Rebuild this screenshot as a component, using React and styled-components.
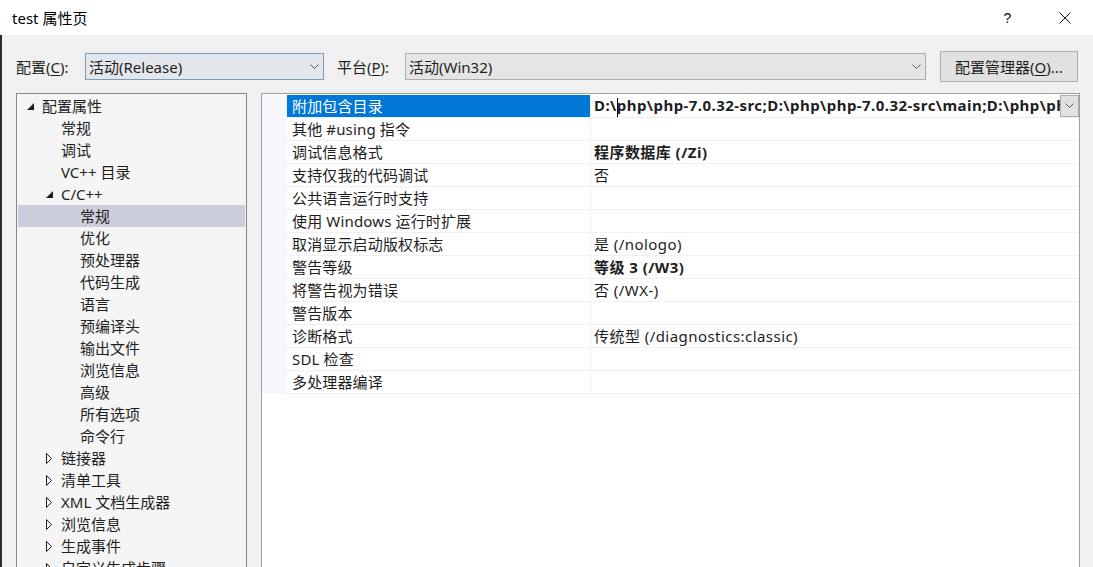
import React from "react";
import styled, { createGlobalStyle } from "styled-components";

const GlobalStyle = createGlobalStyle`
  html, body {
    margin: 0;
    padding: 0;
    background: #f0f0f0;
  }
  body {
    font-family: "Noto Sans", "Noto Sans CJK SC", sans-serif;
    color: #1e1e1e;
  }
`;

const Window = styled.div`
  width: 1093px;
  height: 567px;
  overflow: hidden;
  display: flex;
  flex-direction: column;
  background: #f0f0f0;
`;

const TitleBar = styled.div`
  height: 35px;
  flex: none;
  background: #ffffff;
  display: flex;
  align-items: center;
  padding-left: 12px;
  font-size: 15px;
  color: #000;
`;

const Title = styled.div`
  flex: 1;
  line-height: 20px;
`;

const TitleButton = styled.div`
  width: 57px;
  height: 35px;
  display: flex;
  align-items: center;
  justify-content: center;
  font-family: "Liberation Sans", sans-serif;
  font-size: 14px;
  color: #111;
`;

const Body = styled.div`
  flex: 1;
  min-height: 0;
  border-left: 2px solid #2b2b2b;
  padding: 16px 13px 0 14px;
  display: flex;
  flex-direction: column;
  gap: 11px;
`;

const Toolbar = styled.div`
  display: flex;
  align-items: center;
  height: 31px;
  font-size: 15px;
`;

const Label = styled.span`
  line-height: 20px;
  width: ${(p) => p.$w}px;
  u {
    text-decoration: underline;
    text-underline-offset: 2px;
  }
`;

const Combo = styled.div`
  width: ${(p) => p.$w}px;
  height: 27px;
  box-sizing: border-box;
  border: 1px solid ${(p) => (p.$focus ? "#7f9db9" : "#acacac")};
  background: ${(p) => (p.$focus ? "#e3e6ea" : "#e5e5e5")};
  display: flex;
  align-items: center;
  padding-left: 3px;
  margin-right: ${(p) => p.$mr}px;
  line-height: 20px;
`;

const ComboText = styled.span`
  flex: 1;
`;

const Chevron = styled.span`
  width: 17px;
  display: flex;
  justify-content: center;
`;

const Button = styled.div`
  width: 138px;
  height: 31px;
  box-sizing: border-box;
  border: 1px solid #adadad;
  background: #e1e1e1;
  display: flex;
  align-items: center;
  justify-content: center;
  line-height: 20px;
  u {
    text-decoration: underline;
    text-underline-offset: 2px;
  }
`;

const Panels = styled.div`
  flex: 1;
  min-height: 0;
  display: flex;
  gap: 14px;
`;

const Tree = styled.div`
  width: 231px;
  box-sizing: border-box;
  border: 1px solid #828790;
  border-bottom: none;
  background: #f5f5f5;
  padding-top: 1px;
  font-size: 15px;
  overflow: hidden;
`;

const TreeRow = styled.div`
  height: 22px;
  margin: 0 1px;
  display: flex;
  align-items: center;
  padding-left: ${(p) => 9 + p.$level * 19}px;
  background: ${(p) => (p.$selected ? "#cccedb" : "transparent")};
  line-height: 20px;
  white-space: nowrap;
`;

const Arrow = styled.span`
  width: 15px;
  flex: none;
  display: flex;
  align-items: center;
`;

const Grid = styled.div`
  flex: 1;
  box-sizing: border-box;
  border: 1px solid #a0a0a0;
  border-bottom: none;
  background: #fff;
  padding-top: 1px;
  font-size: 15px;
`;

const PropRow = styled.div`
  display: grid;
  grid-template-columns: 25px 304px 1fr;
  height: 23px;
`;

const Gutter = styled.div`
  background: #f5f7fc;
`;

const NameCell = styled.div`
  border-bottom: 1px solid #eef0f4;
  border-right: 1px solid #eef0f4;
  padding-left: 5px;
  display: flex;
  align-items: center;
  line-height: 20px;
  white-space: nowrap;
  letter-spacing: 0.15px;
  background: ${(p) => (p.$selected ? "#0078d7" : "transparent")};
  color: ${(p) => (p.$selected ? "#fff" : "#1e1e1e")};
`;

const ValueCell = styled.div`
  border-bottom: 1px solid #eef0f4;
  padding-left: 3px;
  display: flex;
  align-items: center;
  line-height: 20px;
  white-space: nowrap;
  overflow: hidden;
  letter-spacing: 0.45px;
  font-weight: ${(p) => (p.$bold ? 700 : 400)};
  color: #1e1e1e;
`;

const ValueText = styled.span`
  flex: 1;
  overflow: hidden;
`;

const Caret = styled.span`
  display: inline-block;
  width: 0;
  height: 19px;
  border-left: 1px solid #000;
  vertical-align: middle;
  margin: 0 -1px 0 0;
`;

const DropButton = styled.div`
  width: 19px;
  height: 22px;
  flex: none;
  box-sizing: border-box;
  border: 1px solid #adadad;
  background: #e1e1e1;
  display: flex;
  align-items: center;
  justify-content: center;
  margin-top: -1px;
`;

const ChevronIcon = () => (
  <svg width="9" height="5" viewBox="0 0 9 5">
    <polyline points="0.5,0.5 4.5,4.5 8.5,0.5" fill="none" stroke="#555" strokeWidth="1" />
  </svg>
);

const OpenArrow = () => (
  <svg width="7" height="7" viewBox="0 0 7 7">
    <polygon points="7,0 7,7 0,7" fill="#1e1e1e" />
  </svg>
);

const ClosedArrow = () => (
  <svg width="6" height="11" viewBox="0 0 6 11">
    <polygon points="0.5,0.5 5.5,5.5 0.5,10.5" fill="none" stroke="#1e1e1e" strokeWidth="1" />
  </svg>
);

const CloseIcon = () => (
  <svg width="12" height="12" viewBox="0 0 12 12">
    <path d="M0.5 0.5 L11.5 11.5 M11.5 0.5 L0.5 11.5" stroke="#111" strokeWidth="1" />
  </svg>
);

const treeItems = [
  { label: "配置属性", level: 0, arrow: "open" },
  { label: "常规", level: 1 },
  { label: "调试", level: 1 },
  { label: "VC++ 目录", level: 1 },
  { label: "C/C++", level: 1, arrow: "open" },
  { label: "常规", level: 2, selected: true },
  { label: "优化", level: 2 },
  { label: "预处理器", level: 2 },
  { label: "代码生成", level: 2 },
  { label: "语言", level: 2 },
  { label: "预编译头", level: 2 },
  { label: "输出文件", level: 2 },
  { label: "浏览信息", level: 2 },
  { label: "高级", level: 2 },
  { label: "所有选项", level: 2 },
  { label: "命令行", level: 2 },
  { label: "链接器", level: 1, arrow: "closed" },
  { label: "清单工具", level: 1, arrow: "closed" },
  { label: "XML 文档生成器", level: 1, arrow: "closed" },
  { label: "浏览信息", level: 1, arrow: "closed" },
  { label: "生成事件", level: 1, arrow: "closed" },
  { label: "自定义生成步骤", level: 1, arrow: "closed" },
];

const props = [
  { name: "附加包含目录", value: "php\\php-7.0.32-src;D:\\php\\php-7.0.32-src\\main;D:\\php\\php-7.0.32-src\\Zend", bold: true, selected: true },
  { name: "其他 #using 指令", value: "" },
  { name: "调试信息格式", value: "程序数据库 (/Zi)", bold: true },
  { name: "支持仅我的代码调试", value: "否" },
  { name: "公共语言运行时支持", value: "" },
  { name: "使用 Windows 运行时扩展", value: "" },
  { name: "取消显示启动版权标志", value: "是 (/nologo)" },
  { name: "警告等级", value: "等级 3 (/W3)", bold: true },
  { name: "将警告视为错误", value: "否 (/WX-)" },
  { name: "警告版本", value: "" },
  { name: "诊断格式", value: "传统型 (/diagnostics:classic)" },
  { name: "SDL 检查", value: "" },
  { name: "多处理器编译", value: "" },
];

export default function App() {
  return (
    <>
      <GlobalStyle />
      <Window>
        <TitleBar>
          <Title>test 属性页</Title>
          <TitleButton>?</TitleButton>
          <TitleButton>
            <CloseIcon />
          </TitleButton>
        </TitleBar>
        <Body>
          <Toolbar>
            <Label $w={69}>
              配置(<u>C</u>):
            </Label>
            <Combo $w={239} $mr={13} $focus>
              <ComboText>活动(Release)</ComboText>
              <Chevron>
                <ChevronIcon />
              </Chevron>
            </Combo>
            <Label $w={68}>
              平台(<u>P</u>):
            </Label>
            <Combo $w={521} $mr={14}>
              <ComboText>活动(Win32)</ComboText>
              <Chevron>
                <ChevronIcon />
              </Chevron>
            </Combo>
            <Button>
              配置管理器(<u>O</u>)...
            </Button>
          </Toolbar>
          <Panels>
            <Tree>
              {treeItems.map((it, i) => (
                <TreeRow key={i} $level={it.level} $selected={it.selected}>
                  <Arrow>
                    {it.arrow === "open" && <OpenArrow />}
                    {it.arrow === "closed" && <ClosedArrow />}
                  </Arrow>
                  {it.label}
                </TreeRow>
              ))}
            </Tree>
            <Grid>
              {props.map((p, i) => (
                <PropRow key={i}>
                  <Gutter />
                  <NameCell $selected={p.selected}>{p.name}</NameCell>
                  <ValueCell $bold={p.bold}>
                    {p.selected ? (
                      <>
                        <ValueText>
                          D:\<Caret />
                          {p.value}
                        </ValueText>
                        <DropButton>
                          <ChevronIcon />
                        </DropButton>
                      </>
                    ) : (
                      <ValueText>{p.value}</ValueText>
                    )}
                  </ValueCell>
                </PropRow>
              ))}
            </Grid>
          </Panels>
        </Body>
      </Window>
    </>
  );
}
